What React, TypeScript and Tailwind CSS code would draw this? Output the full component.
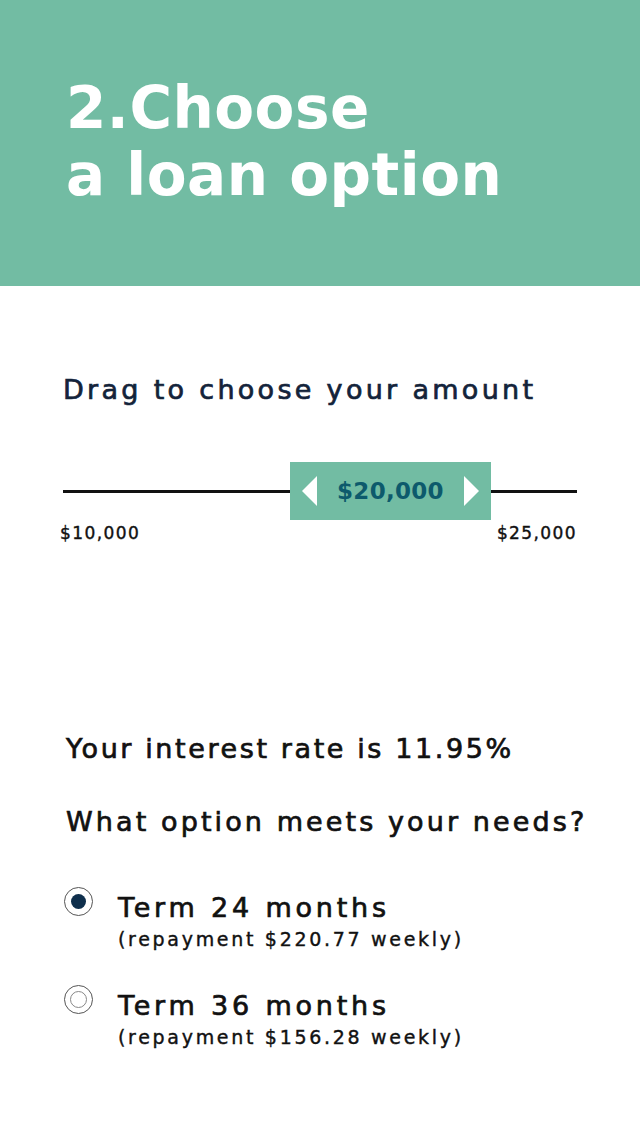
import { useState } from "react";

const options = [
  { term: 24, repayment: "220.77" },
  { term: 36, repayment: "156.28" },
];

const font = { fontFamily: "'DejaVu Sans', 'Noto Sans', sans-serif" };

function Radio({ checked }: { checked: boolean }) {
  return (
    <span className="flex h-[29px] w-[29px] shrink-0 items-center justify-center rounded-full border-[1.5px] border-[#555] bg-white">
      {checked ? (
        <span className="h-[15px] w-[15px] rounded-full bg-[#0f2f4c]" />
      ) : (
        <span className="h-[17px] w-[17px] rounded-full border border-[#888]" />
      )}
    </span>
  );
}

export default function App() {
  const [selected, setSelected] = useState(24);

  return (
    <div className="min-h-[1136px] w-[640px] bg-white" style={font}>
      <header className="h-[286px] bg-[#72bca3] px-[66px] pt-[75px]">
        <h1 className="text-[58px] font-bold leading-[67px] tracking-[0.5px] text-white">
          2.Choose
          <br />
          a loan option
        </h1>
      </header>

      <section className="px-[63px] pt-[86px]">
        <h2 className="whitespace-nowrap text-[27px] leading-[36px] tracking-[3.3px] text-[#13233a] [-webkit-text-stroke:0.7px_#13233a]">
          Drag to choose your amount
        </h2>

        <div className="mt-[54px]">
          <div className="relative flex h-[58px] items-center">
            <div className="h-[3px] w-full bg-[#111]" />
            <div className="absolute left-[227px] top-0 flex h-[58px] w-[201px] items-center justify-between bg-[#72bca3] px-[12px]">
              <svg width="15" height="30" viewBox="0 0 15 30">
                <path d="M15 0 L0 15 L15 30 Z" fill="#fff" />
              </svg>
              <span className="text-[23px] font-bold tracking-[0.3px] text-[#0d5a6c]">$20,000</span>
              <svg width="15" height="30" viewBox="0 0 15 30">
                <path d="M0 0 L15 15 L0 30 Z" fill="#fff" />
              </svg>
            </div>
          </div>
          <div className="-ml-[3px] mt-[1px] flex justify-between text-[17px] tracking-[1.4px] text-[#111] [-webkit-text-stroke:0.4px_#111]">
            <span>$10,000</span>
            <span>$25,000</span>
          </div>
        </div>
      </section>

      <section className="px-[66px] pt-[184px]">
        <p className="whitespace-nowrap text-[27px] leading-[36px] tracking-[2.6px] text-[#111] [-webkit-text-stroke:0.7px_#111]">
          Your interest rate is 11.95%
        </p>
        <p className="mt-[37px] whitespace-nowrap text-[27px] leading-[36px] tracking-[3.1px] text-[#111] [-webkit-text-stroke:0.7px_#111]">
          What option meets your needs?
        </p>

        <div className="mt-[50px] flex flex-col gap-[36px]">
          {options.map((o) => (
            <button
              key={o.term}
              onClick={() => setSelected(o.term)}
              className="flex items-start gap-[25px] text-left"
            >
              <span className="-ml-[2px] -mt-[3px]">
                <Radio checked={selected === o.term} />
              </span>
              <span className="flex flex-col whitespace-nowrap">
                <span className="text-[27px] leading-[36px] tracking-[3.8px] text-[#111] [-webkit-text-stroke:0.7px_#111]">
                  Term {o.term} months
                </span>
                <span className="text-[19px] leading-[26px] tracking-[2.7px] text-[#111] [-webkit-text-stroke:0.4px_#111]">
                  (repayment ${o.repayment} weekly)
                </span>
              </span>
            </button>
          ))}
        </div>
      </section>
    </div>
  );
}
